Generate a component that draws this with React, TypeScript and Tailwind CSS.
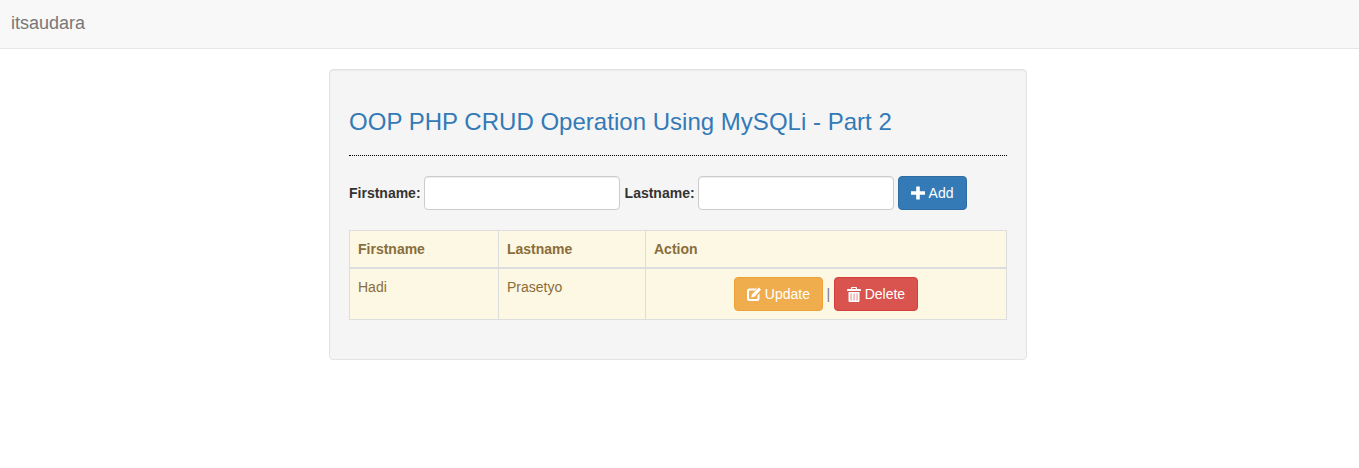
import React from "react";

const PlusIcon: React.FC = () => (
  <svg width="14" height="14" viewBox="0 0 14 14" className="block" fill="currentColor">
    <path d="M5.200 0.500h3.600v4.700H14v3.600H8.800v4.700H5.200V8.800H0V5.200h5.200z" />
  </svg>
);

const EditIcon: React.FC = () => (
  <svg width="14" height="14" viewBox="0 0 14 14" className="block" fill="currentColor">
    <path d="M2.500 1.500H10L8 3.500H3a1 1 0 0 0-1 1v6.500a1 1 0 0 0 1 1h6.500a1 1 0 0 0 1-1V8.500l2-2v5A2.500 2.500 0 0 1 10 14H2.500A2.500 2.500 0 0 1 0 11.500v-7.500a2.500 2.500 0 0 1 2.500-2.500z" />
    <path d="M11.800.5 14 2.800 7.400 9.700 4.200 10.600 5 7.300z" />
  </svg>
);

const TrashIcon: React.FC = () => (
  <svg width="14" height="15" viewBox="0 0 14 15" className="block" fill="currentColor">
    <path d="M5 0h4a1 1 0 0 1 1 1v1h3a1 1 0 0 1 1 1v1H0V3a1 1 0 0 1 1-1h3V1a1 1 0 0 1 1-1zm.2 1v1h3.600V1z" fillRule="evenodd" />
    <path d="M1.500 5h11v9a1 1 0 0 1-1 1h-9a1 1 0 0 1-1-1zm2.200 1.500V13.500h.7V6.500zm3 0V13.500h.7V6.500zm3 0V13.500h.7V6.500z" fillRule="evenodd" />
  </svg>
);

const inputClass =
  "h-[34px] w-[196px] rounded-[4px] border border-[#ccc] bg-white px-3 shadow-[inset_0_1px_1px_rgba(0,0,0,0.075)]";

const App: React.FC = () => {
  return (
    <div className="min-h-[468px] bg-white font-['Liberation_Sans',Arial,sans-serif] text-[14px] leading-[20px] text-[#333]">
      <nav className="h-[49px] border-b border-[#e7e7e7] bg-[#f8f8f8] px-[11px]">
        <a className="block text-[18px] leading-[47px] text-[#777]">itsaudara</a>
      </nav>

      <div className="mt-[20px] ml-[329px] w-[698px] rounded-[4px] border border-[#e3e3e3] bg-[#f5f5f5] p-[19px] shadow-[inset_0_1px_1px_rgba(0,0,0,0.05)]">
        <h2 className="mt-[20px] mb-0 text-[24px] leading-[26.4px] font-medium tracking-[0.02px] text-[#337ab7]">
          OOP PHP CRUD Operation Using MySQLi - Part 2
        </h2>
        <hr className="mt-[20px] mb-[20px] border-0 border-t border-dotted border-t-black" />

        <form className="mb-[20px] flex h-[34px] items-center">
          <label className="mr-[3px] font-bold">Firstname:</label>
          <input type="text" className={inputClass} />
          <label className="mr-[3px] ml-[5px] font-bold">Lastname:</label>
          <input type="text" className={inputClass} />
          <button
            type="button"
            className="ml-[4px] flex h-[34px] items-center gap-[4px] rounded-[4px] border border-[#2e6da4] bg-[#337ab7] px-[12px] text-white"
          >
            <PlusIcon />
            Add
          </button>
        </form>

        <table className="mb-[20px] w-[658px] table-fixed border-collapse border border-[#ddd] bg-[#fcf8e3] text-[#8a6d3b]">
          <thead>
            <tr>
              <th className="w-[149px] border border-b-2 border-[#ddd] p-[8px] text-left font-bold">Firstname</th>
              <th className="w-[147px] border border-b-2 border-[#ddd] p-[8px] text-left font-bold">Lastname</th>
              <th className="border border-b-2 border-[#ddd] p-[8px] text-left font-bold">Action</th>
            </tr>
          </thead>
          <tbody>
            <tr>
              <td className="border border-[#ddd] p-[8px] align-top">Hadi</td>
              <td className="border border-[#ddd] p-[8px] align-top">Prasetyo</td>
              <td className="border border-[#ddd] p-[8px] align-top">
                <div className="flex items-center justify-center">
                  <button
                    type="button"
                    className="flex h-[34px] items-center gap-[4px] rounded-[4px] border border-[#eea236] bg-[#f0ad4e] px-[12px] text-white"
                  >
                    <EditIcon />
                    Update
                  </button>
                  <span className="mx-[3.5px] text-[#777]">|</span>
                  <button
                    type="button"
                    className="flex h-[34px] items-center gap-[4px] rounded-[4px] border border-[#d43f3a] bg-[#d9534f] px-[12px] text-white"
                  >
                    <TrashIcon />
                    Delete
                  </button>
                </div>
              </td>
            </tr>
          </tbody>
        </table>
      </div>
    </div>
  );
};

export default App;
